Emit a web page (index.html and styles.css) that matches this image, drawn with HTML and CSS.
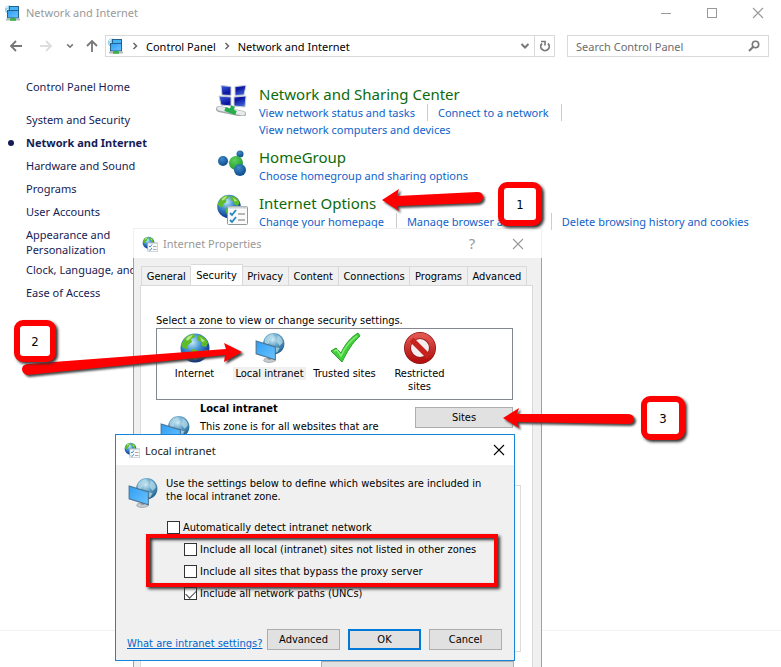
FILE: index.html
```html
<!DOCTYPE html>
<html lang="en">
<head>
    <meta charset="UTF-8">
    <meta name="viewport" content="width=device-width, initial-scale=1.0">
    <title>Network and Internet</title>
    <link rel="stylesheet" href="styles.css">
</head>
<body>

<!-- shared icons -->
<svg class="defs" aria-hidden="true">
    <defs>
        <radialGradient id="gSea" cx="40%" cy="30%" r="70%">
            <stop offset="0" stop-color="#c4ecfb"/>
            <stop offset="0.45" stop-color="#3f8fd0"/>
            <stop offset="1" stop-color="#0b2f86"/>
        </radialGradient>
        <radialGradient id="gPale" cx="45%" cy="30%" r="70%">
            <stop offset="0" stop-color="#d3eef7"/>
            <stop offset="0.5" stop-color="#5b9cc3"/>
            <stop offset="1" stop-color="#215f8c"/>
        </radialGradient>
        <linearGradient id="gScreen" x1="0" y1="0" x2="1" y2="1">
            <stop offset="0" stop-color="#2f9df4"/>
            <stop offset="1" stop-color="#6cc4ff"/>
        </linearGradient>
        <linearGradient id="gNavy" x1="0" y1="0" x2="1" y2="1">
            <stop offset="0" stop-color="#3c62e0"/>
            <stop offset="0.5" stop-color="#0a13a0"/>
            <stop offset="1" stop-color="#4c7be8"/>
        </linearGradient>
        <radialGradient id="gBlue" cx="40%" cy="30%" r="70%">
            <stop offset="0" stop-color="#3f8ac8"/>
            <stop offset="1" stop-color="#0d4c8c"/>
        </radialGradient>
        <radialGradient id="gGreen" cx="40%" cy="30%" r="70%">
            <stop offset="0" stop-color="#5fd05a"/>
            <stop offset="1" stop-color="#1f9b35"/>
        </radialGradient>
        <linearGradient id="gRed" x1="0" y1="0" x2="0" y2="1">
            <stop offset="0" stop-color="#e0564f"/>
            <stop offset="1" stop-color="#b3100f"/>
        </linearGradient>
    </defs>
    <symbol id="net" viewBox="0 0 16 16">
        <circle cx="4" cy="4.500" r="4" fill="#8fcbe6"/>
        <path d="M1 3l2-1.500M1.500 6l1.500-2" stroke="#e6f7fd" stroke-width="1.200"/>
        <rect x="4.500" y="1.500" width="9" height="6.500" fill="#45b4f5" stroke="#24628f"/>
        <rect x="2.500" y="5.500" width="11" height="7.500" fill="url(#gScreen)" stroke="#24628f"/>
        <path d="M1 14.500h14" stroke="#b9bcbd" stroke-width="2"/>
        <path d="M5 14.500h6M8 13v2" stroke="#3cb043" stroke-width="2.500"/>
    </symbol>
    <symbol id="globe" viewBox="0 0 32 32">
        <circle cx="16" cy="16" r="14.500" fill="url(#gSea)"/>
        <path d="M4 9C7 4 11 2 15 2l1 3-4 2 1 3-4 3-1 4-4-1-2-3zM18 3c5 0 9 3 11 8l-2 4-4-1-1-4-4-2zM13 17l5 1 3 4-4 6-3-1-2-5zM25 19l4-1c0 4-2 7-4 8z" fill="#5dbb2c"/>
        <path d="M7 7c2-3 5-4 7-4l-3 4-3 2zM21 5l5 4-3 1z" fill="#bde77d"/>
    </symbol>
    <symbol id="inetopt" viewBox="0 0 32 32">
        <svg x="0" y="0" width="26" height="27"><use href="#globe"/></svg>
        <rect x="11.500" y="13.500" width="20" height="18" rx="1" fill="#fafafa" stroke="#8f989d"/>
        <path d="M12 14.500h19" stroke="#ccd3d7" stroke-width="2"/>
        <path d="M14 20l2 2 4-5M14 27l2 2 4-5" fill="none" stroke="#2387c4" stroke-width="1.800"/>
        <path d="M22 21h7M22 27h7" stroke="#6e767a" stroke-width="1.200"/>
    </symbol>
    <symbol id="intranet" viewBox="0 0 28 30">
        <circle cx="17.500" cy="11" r="10" fill="url(#gPale)"/>
        <path d="M9 7c2-4 6-5 8-5l1 3-4 3-2 4-3-1zM21 3c3 1 5 4 5 7l-3 3-3-4 1-3zM17 14l6 1-2 4-4 1z" fill="#b5dbe8" opacity="0.750"/>
        <path d="M9 25l8-1 2 3c-3 2-9 2-11 0z" fill="#c6ccd0" stroke="#899197" stroke-width="0.600"/>
        <path d="M12 21l3 1v4h-3z" fill="#8a959c"/>
        <path d="M1 8.500l18 5.500v12L1 20.500z" fill="url(#gScreen)" stroke="#4a7290"/>
    </symbol>
    <symbol id="cross" viewBox="0 0 12 12">
        <path d="M1 1l10 10M11 1L1 11" fill="none" stroke="currentColor" stroke-width="1.100"/>
    </symbol>
    <symbol id="chev" viewBox="0 0 10 10">
        <path d="M1.500 3l3.500 3.500L8.500 3" fill="none" stroke="currentColor" stroke-width="2"/>
    </symbol>
    <symbol id="chevRight" viewBox="0 0 10 10">
        <path d="M3.500 2l3 3-3 3" fill="none" stroke="currentColor" stroke-width="1.500"/>
    </symbol>
</svg>

<div class="desktop">

    <div class="explorer">
        <div class="titlebar">
            <svg class="icon16"><use href="#net"/></svg>
            <span class="title">Network and Internet</span>
            <button class="caption" aria-label="Minimize"><svg width="12" height="12"><path d="M1 6.500h10" stroke="currentColor"/></svg></button>
            <button class="caption" aria-label="Maximize"><svg width="12" height="12"><rect x="1.500" y="1.500" width="9" height="9" fill="none" stroke="currentColor"/></svg></button>
            <button class="caption" aria-label="Close"><svg width="12" height="12"><use href="#cross"/></svg></button>
        </div>

        <div class="navbar">
            <div class="arrows">
                <button aria-label="Back"><svg width="14" height="12"><path d="M13 6H2M7 1L2 6l5 5" fill="none" stroke="#777" stroke-width="1.800"/></svg></button>
                <button aria-label="Forward"><svg width="14" height="12"><path d="M1 6h11M7 1l5 5-5 5" fill="none" stroke="#ddd" stroke-width="1.800"/></svg></button>
                <button class="small" aria-label="Recent locations"><svg width="8" height="8"><use href="#chev"/></svg></button>
                <button aria-label="Up"><svg width="12" height="14"><path d="M6 13V2M1 7l5-5 5 5" fill="none" stroke="#777" stroke-width="1.800"/></svg></button>
            </div>
            <div class="address">
                <svg class="icon16"><use href="#net"/></svg>
                <svg class="sep"><use href="#chevRight"/></svg>
                <a href="#">Control Panel</a>
                <svg class="sep"><use href="#chevRight"/></svg>
                <a href="#">Network and Internet</a>
                <button class="drop" aria-label="Previous locations"><svg width="10" height="10"><use href="#chev"/></svg></button>
                <button class="refresh" aria-label="Refresh"><svg width="12" height="12"><path d="M3 3.500a4.200 4.200 0 1 0 6 0" fill="none" stroke="#777" stroke-width="1.800"/><path d="M2 1.500h4v4" fill="none" stroke="#777" stroke-width="1.600"/></svg></button>
            </div>
            <div class="search">
                <input type="text" placeholder="Search Control Panel" aria-label="Search Control Panel">
                <svg width="12" height="12"><circle cx="7.500" cy="4.500" r="3.200" fill="none" stroke="#777" stroke-width="1.600"/><path d="M5 7l-4 4" stroke="#777" stroke-width="2"/></svg>
            </div>
        </div>

        <div class="content">
            <nav class="sidebar">
                <a class="home" href="#">Control Panel Home</a>
                <ul>
                    <li><a href="#">System and Security</a></li>
                    <li class="current"><a href="#">Network and Internet</a></li>
                    <li><a href="#">Hardware and Sound</a></li>
                    <li><a href="#">Programs</a></li>
                    <li><a href="#">User Accounts</a></li>
                    <li class="two-line"><a href="#">Appearance and<br>Personalization</a></li>
                    <li><a href="#">Clock, Language, and Region</a></li>
                    <li><a href="#">Ease of Access</a></li>
                </ul>
            </nav>

            <div class="categories">
                <div class="category">
                    <svg class="icon32" viewBox="0 0 32 32">
                        <g fill="url(#gNavy)" stroke="#c8cdd2">
                            <path d="M5 1.500l10 1v9l-9-.500zM19 2.500l11-1-2 9.500-9 .500z"/>
                            <path d="M3 12l12 1v9l-10-1zM18 13l12-1-1 11-11-1z"/>
                        </g>
                        <path d="M3 25l24 5" stroke="#a2a8a8" stroke-width="6" stroke-linecap="round"/>
                        <path d="M3 24.500l24 5" stroke="#e7eaea" stroke-width="4" stroke-linecap="round"/>
                        <path d="M9 25l11 4M17 22l-2 6" stroke="#24ad4d" stroke-width="4"/>
                    </svg>
                    <div>
                        <h2><a href="#">Network and Sharing Center</a></h2>
                        <p class="links"><a href="#">View network status and tasks</a><a href="#">Connect to a network</a></p>
                        <p class="links"><a class="last" href="#">View network computers and devices</a></p>
                    </div>
                </div>
                <div class="category">
                    <svg class="icon32" viewBox="0 0 32 32">
                        <path d="M7 14l12 2 5 8M19 16l6-8" stroke="#b9cbd5" fill="none"/>
                        <circle cx="7" cy="14" r="5" fill="url(#gBlue)"/>
                        <circle cx="24" cy="7" r="3.500" fill="url(#gBlue)"/>
                        <circle cx="20" cy="16" r="7" fill="url(#gGreen)"/>
                        <circle cx="24" cy="23" r="6" fill="url(#gBlue)"/>
                    </svg>
                    <div>
                        <h2><a href="#">HomeGroup</a></h2>
                        <p class="links"><a class="last" href="#">Choose homegroup and sharing options</a></p>
                    </div>
                </div>
                <div class="category">
                    <svg class="icon32"><use href="#inetopt"/></svg>
                    <div>
                        <h2><a href="#">Internet Options</a></h2>
                        <p class="links"><a href="#">Change your homepage</a><a href="#">Manage browser add-ons</a><a class="last" href="#">Delete browsing history and cookies</a></p>
                    </div>
                </div>
            </div>
        </div>
    </div>

    <div class="dialog properties">
        <div class="dialog-title">
            <svg class="icon16"><use href="#inetopt"/></svg>
            <span class="title">Internet Properties</span>
            <button class="caption help" aria-label="Help">?</button>
            <button class="caption" aria-label="Close"><svg width="12" height="12"><use href="#cross"/></svg></button>
        </div>
        <div class="dialog-body">
            <div class="tabs">
                <button>General</button>
                <button class="active">Security</button>
                <button>Privacy</button>
                <button>Content</button>
                <button>Connections</button>
                <button>Programs</button>
                <button>Advanced</button>
            </div>
            <div class="tab-page">
                <p>Select a zone to view or change security settings.</p>
                <div class="zones">
                    <button>
                        <svg class="icon32"><use href="#globe"/></svg>
                        <span>Internet</span>
                    </button>
                    <button class="selected">
                        <svg class="icon32"><use href="#intranet"/></svg>
                        <span>Local intranet</span>
                    </button>
                    <button>
                        <svg class="icon32" viewBox="0 0 32 32"><path d="M2 19l5-3 5 5C16 12 22 5 29 1l2 3C23 11 18 20 13 30z" fill="#3fd03a" stroke="#2a9f2b"/><path d="M5 19l3-1 4 6C16 15 22 8 28 4" fill="none" stroke="#8bea78" stroke-width="1.500"/></svg>
                        <span>Trusted sites</span>
                    </button>
                    <button>
                        <svg class="icon32" viewBox="0 0 32 32"><circle cx="16" cy="16" r="12.500" fill="#f4eeee" stroke="#8f1414" stroke-width="7"/><circle cx="16" cy="16" r="12.500" fill="none" stroke="url(#gRed)" stroke-width="5.500"/><path d="M7.500 7.500l17 17" stroke="#c8221f" stroke-width="5.500"/></svg>
                        <span>Restricted sites</span>
                    </button>
                </div>
                <div class="zone-info">
                    <svg class="icon32"><use href="#intranet"/></svg>
                    <div class="zone-text">
                        <strong>Local intranet</strong>
                        <p>This zone is for all websites that are</p>
                    </div>
                    <button class="btn">Sites</button>
                </div>
                <div class="level"></div>
                <button class="btn reset" aria-label="Reset all zones to default level"></button>
            </div>
        </div>
    </div>

    <div class="dialog intranet">
        <div class="dialog-title">
            <svg class="icon16"><use href="#inetopt"/></svg>
            <span class="title">Local intranet</span>
            <button class="caption" aria-label="Close"><svg width="12" height="12"><use href="#cross"/></svg></button>
        </div>
        <div class="dialog-body">
            <div class="intro">
                <svg class="icon32"><use href="#intranet"/></svg>
                <p>Use the settings below to define which websites are included in the local intranet zone.</p>
            </div>
            <div class="options">
                <label><input type="checkbox">Automatically detect intranet network</label>
                <label class="sub"><input type="checkbox">Include all local (intranet) sites not listed in other zones</label>
                <label class="sub"><input type="checkbox">Include all sites that bypass the proxy server</label>
                <label class="sub"><input type="checkbox" checked>Include all network paths (UNCs)</label>
            </div>
            <div class="buttons">
                <a href="#">What are intranet settings?</a>
                <button class="btn">Advanced</button>
                <button class="btn default">OK</button>
                <button class="btn">Cancel</button>
            </div>
        </div>
    </div>

    <!-- annotations -->
    <div class="highlight"></div>
    <svg class="pointer pointer1" viewBox="0 0 106 26"><path d="M3 13L20 2l-2 7 80-4q6 0 6 5t-6 6l-80 3 2 5z"/></svg>
    <svg class="pointer pointer2" viewBox="0 0 222 36"><path d="M220 10L202 1l2 6L5 22q-5 1-5 5t5 6L203 13l-1 7z"/></svg>
    <svg class="pointer pointer3" viewBox="0 0 134 24"><path d="M2 11L18 1l-2 6 110 0q7 0 7 5t-7 5L16 15l2 6z"/></svg>
    <div class="step step1">1</div>
    <div class="step step2">2</div>
    <div class="step step3">3</div>
</div>

</body>
</html>
```

FILE: styles.css
```css
* {
    box-sizing: border-box;
}
body {
    margin: 0;
    background: white;
    color: black;
    font-family: "Noto Sans", "Open Sans", sans-serif;
    font-size: 11px;
}
p, h2, ul {
    margin: 0;
    padding: 0;
}
a {
    text-decoration: none;
}
button {
    font: inherit;
    color: inherit;
    background: none;
    border: none;
    padding: 0;
}
.defs {
    position: absolute;
    width: 0;
    height: 0;
}
.desktop {
    position: relative;
    min-height: 100vh;
    overflow: hidden;
}
.icon16 {
    width: 16px;
    height: 16px;
    flex: none;
}
.icon32 {
    width: 32px;
    height: 32px;
    flex: none;
}

/* explorer window */
.explorer {
    min-height: 631px;
    border-bottom: 1px solid #f2f2f2;
}
.titlebar {
    display: flex;
    align-items: center;
    height: 25px;
    padding-left: 5px;
    color: #999;
}
.title {
    flex: 1;
    margin-left: 5px;
}
.caption {
    display: flex;
    align-items: center;
    justify-content: center;
    width: 46px;
    height: 24px;
}
.navbar {
    display: flex;
    align-items: center;
    padding: 10px 12px 0 1px;
}
.arrows {
    display: flex;
    align-items: center;
    color: #777;
}
.arrows button {
    display: flex;
    justify-content: center;
    width: 30px;
}
.arrows button:last-child {
    width: 26px;
}
.arrows .small {
    width: 18px;
}
.address {
    display: flex;
    align-items: center;
    flex: 1;
    height: 22px;
    border: 1px solid #d9d9d9;
    padding-left: 2px;
}
.address a {
    color: black;
}
.sep {
    width: 10px;
    height: 10px;
    margin: 0 6px;
    color: #666;
}
.drop {
    display: flex;
    justify-content: center;
    width: 18px;
    margin-left: auto;
    color: #777;
}
.refresh {
    display: flex;
    align-items: center;
    justify-content: center;
    width: 20px;
    height: 20px;
    border-left: 1px solid #d9d9d9;
}
.search {
    display: flex;
    align-items: center;
    width: 202px;
    height: 22px;
    margin-left: 12px;
    padding: 0 8px;
    border: 1px solid #d9d9d9;
}
.search input {
    flex: 1;
    min-width: 0;
    padding: 0;
    border: none;
    outline: none;
    font: inherit;
}
.search input::placeholder {
    color: #6d6d6d;
}
.content {
    display: flex;
    padding-top: 22px;
}
.sidebar {
    flex: none;
    width: 216px;
    padding-left: 26px;
    line-height: 15px;
    white-space: nowrap;
}
.sidebar a {
    color: #151c55;
}
.sidebar .home {
    display: block;
    margin-bottom: 18px;
}
.sidebar ul {
    list-style: none;
}
.sidebar li {
    margin-bottom: 8px;
}
.sidebar .two-line {
    margin-bottom: 5px;
}
.current {
    display: flex;
    align-items: center;
    font-weight: bold;
}
.current::before {
    content: "";
    width: 6px;
    height: 6px;
    margin: 0 12px 0 -18px;
    border-radius: 50%;
    background: #151c55;
}
.categories {
    flex: 1;
    padding-top: 5px;
}
.category {
    display: flex;
    gap: 11px;
    margin-bottom: 9px;
    white-space: nowrap;
}
.category h2 {
    font-size: 15px;
    font-weight: normal;
    line-height: 20px;
}
.category h2 a {
    color: #0b6b0b;
}
.links {
    display: flex;
    align-items: center;
    line-height: 17px;
}
.links a {
    color: #0f62c9;
    padding-right: 12px;
    margin-right: 10px;
    border-right: 1px solid #ccc;
}
.links .last {
    border: none;
}

/* dialogs */
.dialog {
    position: absolute;
    display: flex;
    flex-direction: column;
    font-family: "DejaVu Sans Condensed", "Noto Sans", sans-serif;
    line-height: 13px;
}
.dialog-title {
    display: flex;
    flex: none;
    align-items: center;
    height: 30px;
    padding-left: 8px;
    background: white;
    font-family: "Noto Sans", "Open Sans", sans-serif;
}
.dialog-body {
    flex: 1;
    background: #f0f0f0;
}
.properties {
    left: 133px;
    top: 228px;
    bottom: 0;
    width: 409px;
}
.properties .dialog-title {
    border: 1px solid #f0f0f0;
    border-bottom: none;
    color: #999;
}
.help {
    font-size: 15px;
}
.properties .dialog-body {
    display: flex;
    flex-direction: column;
    border: 1px solid #a0a0a0;
    border-width: 0 1px;
    padding: 6px 8px 0 6px;
}
.tabs {
    display: flex;
    align-items: flex-end;
    padding: 0 6px 0 1px;
}
.tabs button {
    flex: auto;
    height: 19px;
    border: 1px solid #d9d9d9;
    border-width: 1px 1px 0 0;
}
.tabs button:first-child {
    border-left-width: 1px;
}
.tabs .active {
    height: 21px;
    background: white;
}
.tab-page {
    flex: 1;
    background: white;
    border: 1px solid #d9d9d9;
    border-bottom: none;
    padding: 28px 11px 0 15px;
}
.zones {
    display: flex;
    width: 357px;
    height: 72px;
    margin-top: 1px;
    padding-top: 3px;
    border: 1px solid #828790;
}
.zones button {
    display: flex;
    flex-direction: column;
    align-items: center;
    gap: 3px;
    width: 75px;
}
.zones span {
    padding: 0 2px;
    white-space: nowrap;
}
.zones button:last-child span {
    white-space: normal;
}
.zones .selected span {
    background: #f0f0f0;
}
.zone-info {
    display: flex;
    align-items: flex-start;
    width: 357px;
    margin-top: 1px;
    padding-left: 3px;
}
.zone-info .icon32 {
    margin-top: 14px;
}
.zone-text {
    flex: 1;
    margin: 1px 0 0 9px;
    white-space: nowrap;
}
.zone-text p {
    margin-top: 5px;
}
.btn {
    flex: none;
    width: 73px;
    height: 21px;
    background: #e1e1e1;
    border: 1px solid #adadad;
}
.zone-info .btn {
    width: 98px;
    margin-top: 6px;
}
.level {
    height: 167px;
    margin-top: 38px;
    border: 1px solid #dcdcdc;
}
.reset {
    display: block;
    width: 193px;
    margin: 9px 7px 0 auto;
}
.intranet {
    left: 115px;
    top: 434px;
    width: 400px;
    border: 1px solid #1883d7;
}
.intranet .dialog-title {
    color: #222;
}
.intranet .caption {
    width: 30px;
    color: black;
}
.intranet .dialog-body {
    padding: 12px 12px 10px 11px;
}
.intro {
    display: flex;
    gap: 7px;
    padding-right: 20px;
}
.options {
    display: flex;
    flex-direction: column;
    gap: 9px;
    margin-top: 12px;
    padding-left: 40px;
}
.options label {
    display: flex;
    align-items: center;
}
.options .sub {
    padding-left: 17px;
}
.options input {
    appearance: none;
    width: 13px;
    height: 13px;
    margin: 0 3px 0 0;
    border: 1px solid #333;
    background: white;
}
.options input:checked::before {
    content: "";
    display: block;
    width: 9px;
    height: 5px;
    margin: 2px 1px;
    border: solid #444;
    border-width: 0 0 1px 1px;
    transform: rotate(-45deg);
}
.buttons {
    display: flex;
    align-items: flex-end;
    gap: 8px;
    margin-top: 29px;
}
.buttons a {
    flex: 1;
    min-width: 0;
    color: #0066cc;
    text-decoration: underline;
    white-space: nowrap;
}
.btn.default {
    border: 2px solid #0078d7;
}

/* annotations */
.highlight {
    position: absolute;
    left: 146px;
    top: 534px;
    width: 352px;
    height: 53px;
    border: 4px solid red;
    box-shadow: 2px 2px 3px #333, inset 2px 2px 3px #333;
}
.step {
    position: absolute;
    display: flex;
    align-items: center;
    justify-content: center;
    width: 44px;
    height: 44px;
    border: 6px solid red;
    border-radius: 9px;
    background: white;
    box-shadow: 2px 2px 3px #333;
    font-family: "DejaVu Sans Condensed", sans-serif;
    font-size: 13px;
}
.step1 {
    left: 498px;
    top: 182px;
}
.step2 {
    left: 14px;
    top: 320px;
    width: 42px;
    height: 42px;
}
.step3 {
    left: 641px;
    top: 396px;
}
.pointer {
    position: absolute;
    fill: red;
    overflow: visible;
    filter: drop-shadow(2px 2px 1px #444);
}
.pointer1 {
    left: 379px;
    top: 187px;
    width: 106px;
    height: 26px;
}
.pointer2 {
    left: 22px;
    top: 342px;
    width: 222px;
    height: 36px;
}
.pointer3 {
    left: 501px;
    top: 407px;
    width: 134px;
    height: 24px;
}
```
